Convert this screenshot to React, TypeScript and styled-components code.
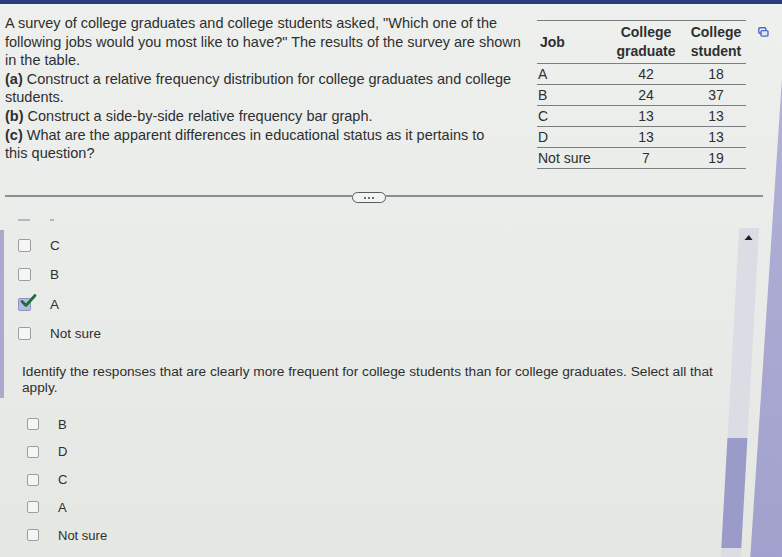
import React from 'react';
import styled, { createGlobalStyle } from 'styled-components';

const GlobalStyle = createGlobalStyle`
  html, body {
    margin: 0;
    padding: 0;
  }
  body {
    width: 782px;
    height: 557px;
    overflow: hidden;
    background: #e9ebe8;
    font-family: "Liberation Sans", Arial, sans-serif;
    color: #2e2f30;
  }
`;

const Screen = styled.div`
  position: relative;
  width: 782px;
  height: 557px;
  box-sizing: border-box;
  overflow: hidden;
  border-top: 4px solid #2a3b80;
  background: linear-gradient(180deg, #eef0ee 0%, #e9ebe8 55%, #e5e7e3 100%);
  display: flex;
  flex-direction: column;
`;

const Problem = styled.div`
  height: 186px;
  box-sizing: border-box;
  padding: 10px 0 0 5px;
  display: flex;
  align-items: flex-start;
`;

const Intro = styled.div`
  width: 532px;
  flex-shrink: 0;
  font-size: 14.5px;
  line-height: 18.6px;
  white-space: nowrap;

  b {
    font-weight: 700;
  }
`;

const DataTable = styled.table`
  margin-top: 6px;
  border-collapse: collapse;
  border-top: 1.5px solid #7b7f80;
  font-size: 14px;
  color: #2e2f30;
`;

const HeadCell = styled.th<{ $align?: string; $w: number }>`
  width: ${(p) => p.$w}px;
  height: 42px;
  padding: 0 0 0 ${(p) => (p.$align === 'left' ? 3 : 0)}px;
  text-align: ${(p) => p.$align || 'center'};
  font-weight: 700;
  line-height: 19px;
  border-bottom: 1.5px solid #7b7f80;
  vertical-align: middle;
`;

const Cell = styled.td<{ $align?: string }>`
  height: 20px;
  padding: 0 0 0 ${(p) => (p.$align === 'left' ? 1 : 0)}px;
  text-align: ${(p) => p.$align || 'center'};
  line-height: 20px;
  border-bottom: 1.5px solid #7b7f80;
`;

const CopyIcon = styled.svg`
  margin: 13px 0 0 12px;
  flex-shrink: 0;
`;

const DividerRow = styled.div`
  height: 12px;
  display: flex;
  align-items: center;
  padding: 0 19px 0 5px;
`;

const Rule = styled.div<{ $w?: number }>`
  height: 1.5px;
  background: #8a9091;
  ${(p) => (p.$w ? `width: ${p.$w}px; flex-shrink: 0;` : 'flex: 1;')}
`;

const MorePill = styled.div`
  width: 32px;
  height: 9px;
  border: 1.5px solid #565b60;
  border-radius: 6px;
  background: #f2f3f2;
  display: flex;
  align-items: center;
  justify-content: center;
  gap: 2px;
  margin-top: 3px;
`;

const Dot = styled.span`
  width: 2px;
  height: 2px;
  border-radius: 1px;
  background: #3d4248;
`;

const Lower = styled.div`
  flex: 1;
  display: flex;
  min-height: 0;
`;

const Answers = styled.div`
  flex: 1;
  padding-left: 18px;
  display: flex;
  flex-direction: column;
`;

const FaintRow = styled.div`
  margin-top: 13px;
  height: 10px;
  display: flex;
  align-items: center;
  gap: 20px;
`;

const FaintDash = styled.span<{ $w: number }>`
  width: ${(p) => p.$w}px;
  height: 1.5px;
  background: #b3b8bb;
`;

const OptionList = styled.div<{ $indent: number; $step: number; $top: number }>`
  margin-top: ${(p) => p.$top}px;
  padding-left: ${(p) => p.$indent}px;
  display: flex;
  flex-direction: column;

  & > div {
    height: ${(p) => p.$step}px;
  }
`;

const Option = styled.div<{ $size: number }>`
  display: flex;
  align-items: center;
  gap: 19px;
  font-size: ${(p) => p.$size}px;
`;

const BoxWrap = styled.span`
  position: relative;
  display: inline-flex;
`;

const Box = styled.span<{ $size: number; $checked?: boolean }>`
  width: ${(p) => p.$size}px;
  height: ${(p) => p.$size}px;
  box-sizing: border-box;
  border: 1.5px solid ${(p) => (p.$checked ? '#8f93c4' : '#9a9ea1')};
  border-radius: 2px;
  background: ${(p) => (p.$checked ? '#b7badf' : '#f4f5f4')};
`;

const Check = styled.svg`
  position: absolute;
  left: 2px;
  top: -5px;
`;

const Question = styled.div`
  margin-top: 16px;
  padding-left: 4px;
  font-size: 13.7px;
  line-height: 16px;
  white-space: nowrap;
`;

const ScrollColumn = styled.div`
  width: 20px;
  margin: 26px 32px 0 0;
  display: flex;
  flex-direction: column;
  transform: skewX(-3.2deg);
`;

const Track = styled.div`
  height: 210px;
  background: #dcdde4;
  display: flex;
  justify-content: center;
  padding-top: 7px;
  box-sizing: border-box;
`;

const Arrow = styled.span`
  width: 0;
  height: 0;
  border-left: 4px solid transparent;
  border-right: 4px solid transparent;
  border-bottom: 5px solid #222;
`;

const Thumb = styled.div`
  height: 110px;
  background: #9a9bc8;
`;

const TrackEnd = styled.div`
  flex: 1;
  background: #dcdde4;
`;

const RightBezel = styled.div`
  position: absolute;
  top: -4px;
  right: 0;
  width: 32px;
  height: 561px;
  background: linear-gradient(180deg, #b4b3d8, #a2a1cd);
  clip-path: polygon(32px 78px, 32px 100%, 0 100%);
`;

const LeftBezel = styled.div`
  position: absolute;
  left: 0;
  top: 226px;
  width: 4px;
  height: 168px;
  background: #aaa9cf;
`;

type Row = { job: string; grad: number; student: number };

const rows: Row[] = [
  { job: 'A', grad: 42, student: 18 },
  { job: 'B', grad: 24, student: 37 },
  { job: 'C', grad: 13, student: 13 },
  { job: 'D', grad: 13, student: 13 },
  { job: 'Not sure', grad: 7, student: 19 },
];

const firstList = [
  { label: 'C' },
  { label: 'B' },
  { label: 'A', checked: true },
  { label: 'Not sure' },
];

const secondList = ['B', 'D', 'C', 'A', 'Not sure'];

const App = () => (
  <>
    <GlobalStyle />
    <Screen>
      <Problem>
        <Intro>
          A survey of college graduates and college students asked, "Which one of the
          <br />
          following jobs would you most like to have?" The results of the survey are shown
          <br />
          in the table.
          <br />
          <b>(a)</b> Construct a relative frequency distribution for college graduates and college
          <br />
          students.
          <br />
          <b>(b)</b> Construct a side-by-side relative frequency bar graph.
          <br />
          <b>(c)</b> What are the apparent differences in educational status as it pertains to
          <br />
          this question?
        </Intro>
        <DataTable>
          <thead>
            <tr>
              <HeadCell $align="left" $w={66}>
                Job
              </HeadCell>
              <HeadCell $w={80}>
                College
                <br />
                graduate
              </HeadCell>
              <HeadCell $w={60}>
                College
                <br />
                student
              </HeadCell>
            </tr>
          </thead>
          <tbody>
            {rows.map((r) => (
              <tr key={r.job}>
                <Cell $align="left">{r.job}</Cell>
                <Cell>{r.grad}</Cell>
                <Cell>{r.student}</Cell>
              </tr>
            ))}
          </tbody>
        </DataTable>
        <CopyIcon width="11" height="10" viewBox="0 0 11 10">
          <rect x="0.8" y="0.8" width="7" height="5.5" rx="1" fill="none" stroke="#4a6cc4" strokeWidth="1.4" />
          <rect x="3" y="3.6" width="7" height="5.5" rx="1" fill="#dfe6f6" stroke="#4a6cc4" strokeWidth="1.4" />
        </CopyIcon>
      </Problem>

      <DividerRow>
        <Rule $w={347} />
        <MorePill>
          <Dot />
          <Dot />
          <Dot />
        </MorePill>
        <Rule />
      </DividerRow>

      <Lower>
        <Answers>
          <FaintRow>
            <FaintDash $w={12} />
            <FaintDash $w={4} />
          </FaintRow>
          <OptionList $indent={0} $step={29.3} $top={6}>
            {firstList.map((o) => (
              <Option key={o.label} $size={13.5}>
                <BoxWrap>
                  <Box $size={13} $checked={o.checked} />
                  {o.checked && (
                    <Check width="17" height="15" viewBox="0 0 17 15">
                      <path d="M2 8.5 L6 12.5 L15 2.5" fill="none" stroke="#1d6e3c" strokeWidth="2.8" strokeLinecap="round" strokeLinejoin="round" />
                    </Check>
                  )}
                </BoxWrap>
                {o.label}
              </Option>
            ))}
          </OptionList>

          <Question>
            Identify the responses that are clearly more frequent for college students than for college graduates. Select all that
            <br />
            apply.
          </Question>

          <OptionList $indent={9} $step={27.8} $top={14}>
            {secondList.map((label) => (
              <Option key={label} $size={13}>
                <BoxWrap>
                  <Box $size={12} />
                </BoxWrap>
                {label}
              </Option>
            ))}
          </OptionList>
        </Answers>

        <ScrollColumn>
          <Track>
            <Arrow />
          </Track>
          <Thumb />
          <TrackEnd />
        </ScrollColumn>
      </Lower>

      <RightBezel />
      <LeftBezel />
    </Screen>
  </>
);

export default App;
